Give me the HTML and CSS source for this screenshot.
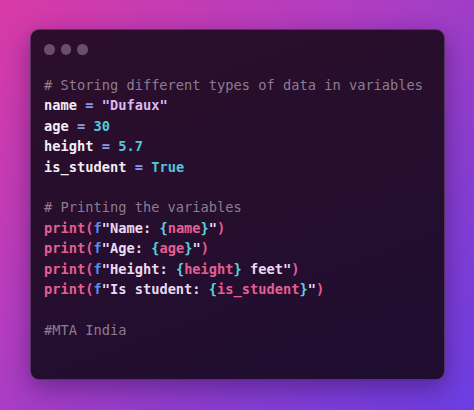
FILE: index.html
```html
<!DOCTYPE html>
<html>
<head>
<meta charset="utf-8">
<link rel="stylesheet" href="styles.css">
</head>
<body>
<div class="card">
  <div class="dots"><span class="dot"></span><span class="dot"></span><span class="dot"></span></div>
  <pre class="code"><span class="c"># Storing different types of data in variables</span>
<span class="v">name</span> <span class="o">=</span> <span class="s">"Dufaux"</span>
<span class="v">age</span> <span class="o">=</span> <span class="n">30</span>
<span class="v">height</span> <span class="o">=</span> <span class="n">5.7</span>
<span class="v">is_student</span> <span class="o">=</span> <span class="n">True</span>

<span class="c"># Printing the variables</span>
<span class="p">print(</span><span class="f">f</span><span class="t">"Name: </span><span class="b">{</span><span class="p">name</span><span class="b">}</span><span class="t">"</span><span class="p">)</span>
<span class="p">print(</span><span class="f">f</span><span class="t">"Age: </span><span class="b">{</span><span class="p">age</span><span class="b">}</span><span class="t">"</span><span class="p">)</span>
<span class="p">print(</span><span class="f">f</span><span class="t">"Height: </span><span class="b">{</span><span class="p">height</span><span class="b">}</span><span class="t"> feet"</span><span class="p">)</span>
<span class="p">print(</span><span class="f">f</span><span class="t">"Is student: </span><span class="b">{</span><span class="p">is_student</span><span class="b">}</span><span class="t">"</span><span class="p">)</span>

<span class="c">#MTA India</span></pre>
</div>
</body>
</html>
```
FILE: styles.css
```css
html, body {
  margin: 0;
  padding: 0;
}
body {
  width: 474px;
  height: 410px;
  box-sizing: border-box;
  padding: 29px 29px 30px 30px;
  background: linear-gradient(135deg, #d93aa6 0%, #b13dc0 40%, #8a3dd0 70%, #6b3ee2 100%);
  overflow: hidden;
}
.card {
  box-sizing: border-box;
  width: 415px;
  height: 351px;
  border-radius: 9px;
  border: 1px solid rgba(200, 150, 220, 0.3);
  background: linear-gradient(160deg, #2c0e2a 0%, #250e2e 55%, #1f0d30 100%);
  box-shadow: 0 8px 24px rgba(40, 10, 70, 0.45);
  padding: 14px 13px 0 13px;
}
.dots {
  display: flex;
  gap: 6px;
  height: 10.5px;
}
.dot {
  width: 10.5px;
  height: 10.5px;
  border-radius: 50%;
  background: #6b4d6e;
}
.code {
  margin: 20.5px 0 0 0;
  font-family: "DejaVu Sans Mono", monospace;
  font-size: 13.7px;
  line-height: 20.4px;
  color: #f1eaf3;
  font-weight: bold;
}
.c { color: #8d7c8f; font-weight: normal; }
.v { color: #f3edf5; }
.o { color: #8797ec; }
.s { color: #d9b9ef; }
.n { color: #52c6d6; }
.p { color: #e45f91; }
.f { color: #5b8cf0; }
.t { color: #ead9f2; }
.b { color: #5ed0d9; }
```
